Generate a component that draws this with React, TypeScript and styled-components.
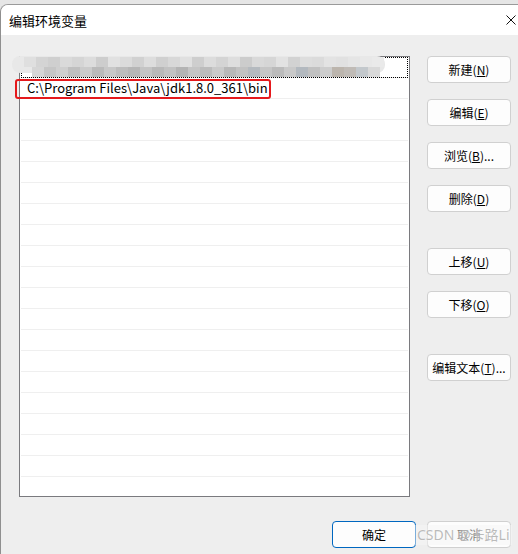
import React from "react";
import styled, { createGlobalStyle } from "styled-components";

const GlobalStyle = createGlobalStyle`
  html, body {
    margin: 0;
    padding: 0;
    background: #e6e6e6;
    overflow: hidden;
  }
  body {
    font-family: "Noto Sans CJK SC", "Noto Sans", sans-serif;
    color: #000;
  }
`;

const Window = styled.div`
  margin-top: 4px;
  width: 540px;
  height: 560px;
  border-top: 1px solid #9a9a9a;
  border-left: 1px solid #8f8f8f;
  border-top-left-radius: 8px;
  overflow: hidden;
  background: #eeeeee;
  display: flex;
  flex-direction: column;
`;

const TitleBar = styled.div`
  height: 30px;
  background: #ffffff;
  display: flex;
  align-items: center;
  padding: 0 0 0 8px;
  width: 517px;
  box-sizing: border-box;
`;

const Title = styled.span`
  font-size: 13px;
  flex: 1;
`;

const CloseBtn = styled.span`
  width: 10px;
  height: 10px;
  margin-right: 2px;
  display: flex;
`;

const Body = styled.div`
  padding: 21px 0 0 18px;
  display: flex;
  flex-direction: column;
`;

const Main = styled.div`
  display: flex;
  gap: 17px;
`;

const ListBox = styled.div`
  position: relative;
  width: 391px;
  height: 441px;
  box-sizing: border-box;
  border: 1px solid #7a7a7e;
  background: #ffffff;
  padding: 0 1px;
`;

const Row = styled.div<{ $focus?: boolean }>`
  height: 21px;
  box-sizing: border-box;
  border-bottom: 1px solid #efefef;
  font-size: 13px;
  line-height: 20px;
  padding-left: 6px;
  white-space: nowrap;
  ${(p) => (p.$focus ? "outline: 1px dotted #000; outline-offset: -1px;" : "")}
`;

const Mosaic = styled.svg`
  position: absolute;
  left: -8px;
  top: -2px;
`;

const Highlight = styled.div`
  position: absolute;
  left: -5px;
  top: 22px;
  width: 256px;
  height: 20px;
  box-sizing: border-box;
  border: 2px solid #e5191c;
  border-radius: 3px;
`;

const Buttons = styled.div`
  display: flex;
  flex-direction: column;
`;

const Btn = styled.button<{ $top?: number; $primary?: boolean }>`
  width: 84px;
  height: 27px;
  flex-shrink: 0;
  margin-top: ${(p) => p.$top ?? 16}px;
  box-sizing: border-box;
  background: #fdfdfd;
  border: 1px solid ${(p) => (p.$primary ? "#0067c0" : "#d0d0d0")};
  border-radius: 4px;
  font-family: "Noto Sans CJK SC", "Noto Sans", sans-serif;
  font-size: 12px;
  color: #000;
  padding: 0;
  display: flex;
  align-items: center;
  justify-content: center;
  u {
    text-decoration: underline;
    text-underline-offset: 1px;
  }
`;

const Footer = styled.div`
  position: relative;
  display: flex;
  gap: 11px;
  margin-top: 24px;
  padding-left: 313px;
`;

const Watermark = styled.span`
  position: absolute;
  left: 396px;
  top: 4px;
  padding: 0 2px;
  font-family: "Noto Sans", "Noto Sans CJK SC", sans-serif;
  font-size: 14px;
  line-height: 20px;
  color: rgba(165, 165, 165, 0.75);
  background: rgba(245, 245, 245, 0.5);
  text-shadow: 0 0 2px rgba(255, 255, 255, 0.9);
  white-space: nowrap;
`;

const topGrays = [
  "#dfdfdf", "#d4d4d4", "#cfcfcf", "#dadada", "#d5d5d5", "#dcdcdc", "#cdcdcd", "#e1e1e1",
  "#dbdbdb", "#d1d1d1", "#dddddd", "#d0d0d0", "#d8d8d8", "#e0e0e0", "#cecece", "#dcdcdc",
  "#d4d4d4", "#dedede", "#cccccc", "#d9d9d9", "#d6d6d6", "#e2e2e2", "#d2d2d2", "#dddddd",
  "#dbdbdb", "#e3e3e3", "#e1e1e1", "#e5e5e5", "#e8e8e8", "#eaeaea",
];
const bottomGrays = [
  "#d6d6d6", "#c6c6c6", "#cfcfcf", "#bfbfbf", "#cbcbcb", "#bababa", "#c8c8c8", "#bdbdbd",
  "#b6b6b6", "#c4c4c4", "#b9b9b9", "#c2c2c2", "#b4b4b4", "#c5c5c5", "#bcbcbc", "#cacaca",
  "#b8b8b8", "#c2c2c2", "#b5babf", "#c6c6c6", "#bbbbbb", "#c9c9c9", "#b3b9bf", "#c1c1c1",
  "#cdcdcd", "#bcb5ad", "#c0bbb6", "#c3c8cc", "#d9d9d9",
];

const Close = () => (
  <svg width="10" height="10" viewBox="0 0 10 10">
    <path d="M0.5 0.5 L9.5 9.5 M9.5 0.5 L0.5 9.5" stroke="#111" strokeWidth="1" fill="none" />
  </svg>
);

const BlurredRow = () => (
  <Mosaic width="380" height="24" viewBox="0 0 380 24">
    <rect x="0" y="1" width="373" height="17" rx="8" fill="#e8e8e8" />
    {topGrays.map((c, i) => (
      <rect key={"t" + i} x={12 + i * 12} y="2" width="12" height="10" fill={c} />
    ))}
    {bottomGrays.map((c, i) => (
      <rect key={"b" + i} x={20 + i * 12} y="12" width="12" height="10" fill={c} />
    ))}
  </Mosaic>
);

export default function App() {
  const rows = Array.from({ length: 19 });
  return (
    <>
      <GlobalStyle />
      <Window>
        <TitleBar>
          <Title>编辑环境变量</Title>
          <CloseBtn>
            <Close />
          </CloseBtn>
        </TitleBar>
        <Body>
          <Main>
            <ListBox>
              <Row $focus />
              <Row>C:\Program Files\Java\jdk1.8.0_361\bin</Row>
              {rows.map((_, i) => (
                <Row key={i} />
              ))}
              <BlurredRow />
              <Highlight />
            </ListBox>
            <Buttons>
              <Btn $top={0}>新建(<u>N</u>)</Btn>
              <Btn>编辑(<u>E</u>)</Btn>
              <Btn>浏览(<u>B</u>)...</Btn>
              <Btn>删除(<u>D</u>)</Btn>
              <Btn $top={36}>上移(<u>U</u>)</Btn>
              <Btn>下移(<u>O</u>)</Btn>
              <Btn $top={36}>编辑文本(<u>T</u>)...</Btn>
            </Buttons>
          </Main>
          <Footer>
            <Btn $top={0} $primary>确定</Btn>
            <Btn $top={0}>取消</Btn>
            <Watermark>CSDN @卡路Li</Watermark>
          </Footer>
        </Body>
      </Window>
    </>
  );
}
